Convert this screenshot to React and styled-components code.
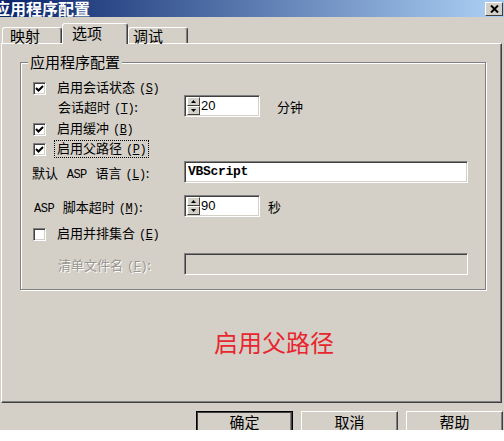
import React from 'react';
import styled, { createGlobalStyle } from 'styled-components';

const colors = {
  face: '#d4d0c8',
  light: '#ffffff',
  shadow: '#808080',
  dark: '#404040',
  gray: '#9a968f',
};

const GlobalStyle = createGlobalStyle`
  html, body {
    margin: 0;
    padding: 0;
    background: #fff;
    overflow: hidden;
  }
  body {
    font-family: "Noto Sans CJK SC", "Noto Sans", sans-serif;
    color: #000;
  }
`;

const Window = styled.div`
  width: 504px;
  height: 430px;
  background: ${colors.face};
  overflow: hidden;
  display: flex;
  flex-direction: column;
`;

const TitleBar = styled.div`
  height: 17px;
  flex-shrink: 0;
  display: flex;
  align-items: center;
  justify-content: space-between;
  background: linear-gradient(to right, #0a246a 0%, #a6caf0 96%);
`;

const Title = styled.span`
  margin-left: -6px;
  color: #fff;
  font-weight: bold;
  font-size: 16px;
  line-height: 17px;
  white-space: nowrap;
`;

const CloseButton = styled.div`
  width: 18px;
  height: 14px;
  margin-right: 1px;
  box-sizing: border-box;
  background: ${colors.face};
  border-top: 1px solid ${colors.light};
  border-left: 1px solid ${colors.light};
  border-right: 1px solid ${colors.dark};
  border-bottom: 1px solid ${colors.dark};
  display: flex;
  align-items: center;
  justify-content: center;
`;

const Tabs = styled.div`
  display: flex;
  align-items: flex-end;
  height: 20px;
  margin-top: 6px;
  padding-left: 2px;
  position: relative;
  z-index: 1;
`;

const Tab = styled.div`
  width: ${p => p.$w}px;
  height: ${p => (p.$active ? 21 : 16)}px;
  margin-bottom: ${p => (p.$active ? -1 : 0)}px;
  box-sizing: border-box;
  background: ${colors.face};
  border-top: 1px solid ${colors.light};
  border-left: 1px solid ${colors.light};
  border-right: 1px solid ${colors.dark};
  box-shadow: inset -1px 0 0 ${colors.shadow};
  border-radius: 3px 3px 0 0;
  padding-left: ${p => p.$pad}px;
  font-size: 15px;
  line-height: ${p => (p.$active ? 17 : 15)}px;
  white-space: nowrap;
`;

const Panel = styled.div`
  margin-left: 1px;
  width: 501px;
  height: 360px;
  flex-shrink: 0;
  box-sizing: border-box;
  border-top: 1px solid ${colors.light};
  border-left: 1px solid ${colors.light};
  border-right: 1px solid ${colors.dark};
  border-bottom: 1px solid ${colors.dark};
  box-shadow: inset -1px -1px 0 ${colors.shadow};
  padding: 18px 15px 0 18px;
`;

const Group = styled.div`
  position: relative;
  height: 228px;
  box-sizing: border-box;
  border: 1px solid ${colors.shadow};
  box-shadow: 1px 1px 0 ${colors.light}, inset 1px 1px 0 ${colors.light};
  padding: 18px 0 0 11px;
`;

const Legend = styled.span`
  position: absolute;
  top: -10px;
  left: 7px;
  padding: 0 2px;
  background: ${colors.face};
  font-size: 15px;
  line-height: 18px;
`;

const Row = styled.div`
  display: flex;
  align-items: center;
  height: ${p => p.$h}px;
  margin-top: ${p => p.$mt || 0}px;
  font-size: 13px;
  white-space: nowrap;
`;

const Box = styled.span`
  width: 13px;
  height: 13px;
  margin-left: 1px;
  box-sizing: border-box;
  background: #fff;
  border-top: 1px solid ${colors.shadow};
  border-left: 1px solid ${colors.shadow};
  border-right: 1px solid ${colors.light};
  border-bottom: 1px solid ${colors.light};
  box-shadow: inset 1px 1px 0 ${colors.dark}, inset -1px -1px 0 ${colors.face};
  display: flex;
  align-items: center;
  justify-content: center;
  flex-shrink: 0;
`;

const CheckText = styled.span`
  margin-left: 8px;
  padding: 0 2px;
  line-height: 14px;
  border: 1px dotted ${p => (p.$focus ? '#000' : 'transparent')};
`;

const Label = styled.span`
  width: ${p => 152 - (p.$indent || 0)}px;
  padding-left: ${p => p.$indent || 0}px;
  color: ${p => (p.$disabled ? colors.gray : '#000')};
  text-shadow: ${p => (p.$disabled ? `1px 1px 0 ${colors.light}` : 'none')};
  flex-shrink: 0;
`;

const Latin = styled.span`
  font-family: "Liberation Mono", monospace;
  font-size: 12px;
  letter-spacing: -0.5px;
  margin: 0 2px;
`;

const Key = styled.span`
  font-family: "Liberation Mono", monospace;
  font-size: 12px;
  margin-left: 4px;
  letter-spacing: -0.5px;
  & u {
    text-decoration-thickness: 1px;
    text-underline-offset: 1px;
  }
`;

const Field = styled.div`
  width: ${p => p.$w}px;
  height: 22px;
  box-sizing: border-box;
  background: ${p => (p.$disabled ? colors.face : '#fff')};
  border-top: 1px solid ${colors.shadow};
  border-left: 1px solid ${colors.shadow};
  border-right: 1px solid ${colors.light};
  border-bottom: 1px solid ${colors.light};
  box-shadow: inset 1px 1px 0 ${colors.dark}, inset -1px -1px 0 ${colors.face};
  display: flex;
  align-items: center;
  flex-shrink: 0;
`;

const FieldText = styled.span`
  padding-left: ${p => p.$pad}px;
  font-family: ${p => (p.$mono ? '"Liberation Mono", monospace' : '"Liberation Sans", sans-serif')};
  font-weight: ${p => (p.$mono ? 'bold' : 'normal')};
  font-size: 13px;
  line-height: 16px;
  letter-spacing: ${p => (p.$mono ? '-0.3px' : '0')};
`;

const Spin = styled.div`
  display: flex;
  flex-direction: column;
  margin-left: 2px;
  width: 13px;
  height: 18px;
`;

const SpinButton = styled.div`
  flex: 1;
  box-sizing: border-box;
  background: ${colors.face};
  border-top: 1px solid ${colors.light};
  border-left: 1px solid ${colors.light};
  border-right: 1px solid ${colors.dark};
  border-bottom: 1px solid ${colors.dark};
  display: flex;
  align-items: center;
  justify-content: center;
`;

const Unit = styled.span`
  margin-left: ${p => p.$gap}px;
  font-size: 13px;
`;

const Caption = styled.div`
  margin-top: 37px;
  padding-left: 194px;
  font-size: 24px;
  line-height: 30px;
  color: #e8262e;
`;

const ButtonBar = styled.div`
  margin-top: 8px;
  display: flex;
  justify-content: flex-end;
  gap: 8px;
  padding-right: 1px;
`;

const Button = styled.div`
  width: 97px;
  height: 26px;
  flex-shrink: 0;
  box-sizing: border-box;
  background: ${colors.face};
  border: 1px solid;
  border-color: ${p =>
    p.$default ? '#000' : `${colors.light} ${colors.dark} ${colors.dark} ${colors.light}`};
  box-shadow: ${p =>
    p.$default
      ? `inset 1px 1px 0 ${colors.dark}, inset -1px -1px 0 ${colors.dark}, inset -2px -2px 0 ${colors.shadow}`
      : `inset -1px -1px 0 ${colors.shadow}`};
  text-align: center;
  font-size: 15px;
  line-height: 19px;
`;

const Check = () => (
  <svg width="9" height="9" viewBox="0 0 9 9">
    <polyline points="1,4 3.5,6.5 8,2" fill="none" stroke="#000" strokeWidth="2" />
  </svg>
);

const Arrow = ({ up }) => (
  <svg width="5" height="3" viewBox="0 0 5 3">
    <polygon points={up ? '2.5,0 5,3 0,3' : '0,0 5,0 2.5,3'} fill="#000" />
  </svg>
);

const Spinner = ({ value }) => (
  <Field $w={76}>
    <Spin>
      <SpinButton><Arrow up /></SpinButton>
      <SpinButton><Arrow /></SpinButton>
    </Spin>
    <FieldText $pad={1}>{value}</FieldText>
  </Field>
);

const Mn = ({ k }) => (
  <Key>(<u>{k}</u>)</Key>
);

const App = () => {
  return (
    <Window>
      <GlobalStyle />
      <TitleBar>
        <Title>应用程序配置</Title>
        <CloseButton>
          <svg width="9" height="8" viewBox="0 0 9 8">
            <path d="M1 0.5 L8 7.5 M8 0.5 L1 7.5" stroke="#000" strokeWidth="2" />
          </svg>
        </CloseButton>
      </TitleBar>

      <Tabs>
        <Tab $w={60} $pad={7}>映射</Tab>
        <Tab $w={66} $pad={9} $active>选项</Tab>
        <Tab $w={60} $pad={4}>调试</Tab>
      </Tabs>

      <Panel>
        <Group>
          <Legend>应用程序配置</Legend>

          <Row $h={14}>
            <Box><Check /></Box>
            <CheckText>启用会话状态<Mn k="S" /></CheckText>
          </Row>

          <Row $h={22}>
            <Label $indent={26}>会话超时<Mn k="T" />:</Label>
            <Spinner value="20" />
            <Unit $gap={17}>分钟</Unit>
          </Row>

          <Row $h={14} $mt={5}>
            <Box><Check /></Box>
            <CheckText>启用缓冲<Mn k="B" /></CheckText>
          </Row>

          <Row $h={14} $mt={6}>
            <Box><Check /></Box>
            <CheckText $focus>启用父路径<Mn k="P" /></CheckText>
          </Row>

          <Row $h={22} $mt={5}>
            <Label>默认<Latin> ASP </Latin>语言<Mn k="L" />:</Label>
            <Field $w={284}>
              <FieldText $mono $pad={3}>VBScript</FieldText>
            </Field>
          </Row>

          <Row $h={22} $mt={12}>
            <Label><Latin>ASP </Latin>脚本超时<Mn k="M" />:</Label>
            <Spinner value="90" />
            <Unit $gap={8}>秒</Unit>
          </Row>

          <Row $h={14} $mt={10}>
            <Box />
            <CheckText>启用并排集合<Mn k="E" /></CheckText>
          </Row>

          <Row $h={22} $mt={12}>
            <Label $indent={26} $disabled>清单文件名<Mn k="F" />:</Label>
            <Field $w={284} $disabled />
          </Row>
        </Group>

        <Caption>启用父路径</Caption>
      </Panel>

      <ButtonBar>
        <Button $default>确定</Button>
        <Button>取消</Button>
        <Button>帮助</Button>
      </ButtonBar>
    </Window>
  );
};

export default App;
